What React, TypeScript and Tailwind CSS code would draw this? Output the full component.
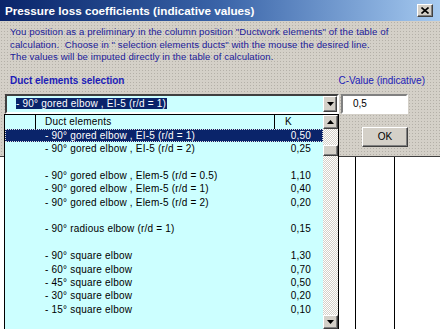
import React from 'react'

const rows: { text: string; k: string }[] = [
  { text: '- 90° gored elbow , EI-5 (r/d = 1)', k: '0,50' },
  { text: '- 90° gored elbow , EI-5 (r/d = 2)', k: '0,25' },
  { text: '', k: '' },
  { text: '- 90° gored elbow , Elem-5 (r/d = 0.5)', k: '1,10' },
  { text: '- 90° gored elbow , Elem-5 (r/d = 1)', k: '0,40' },
  { text: '- 90° gored elbow , Elem-5 (r/d = 2)', k: '0,20' },
  { text: '', k: '' },
  { text: '- 90° radious elbow (r/d = 1)', k: '0,15' },
  { text: '', k: '' },
  { text: '- 90° square elbow', k: '1,30' },
  { text: '- 60° square elbow', k: '0,70' },
  { text: '- 45° square elbow', k: '0,50' },
  { text: '- 30° square elbow', k: '0,20' },
  { text: '- 15° square elbow', k: '0,10' },
  { text: '', k: '' },
]

const raised =
  'bg-[#d4d0c8] border border-t-white border-l-white border-r-[#404040] border-b-[#404040] shadow-[inset_-1px_-1px_#808080]'

function Arrow({ up }: { up?: boolean }) {
  return (
    <svg width="7" height="4" viewBox="0 0 7 4">
      <path d={up ? 'M0 4 L3.5 0 L7 4 Z' : 'M0 0 L7 0 L3.5 4 Z'} fill="#000" />
    </svg>
  )
}

export default function App() {
  return (
    <div className="relative w-[440px] h-[329px] overflow-hidden bg-white font-['Liberation_Sans',Arial,sans-serif]">
      {/* dialog */}
      <div className="h-[157px] bg-[#d4d0c8] bg-[radial-gradient(#b4b0a8_0.6px,transparent_0.7px)] bg-[length:3px_3px] border-b border-[#404040]">
        <div className="h-[21px] flex items-center justify-between pl-[5px] pr-[7px] bg-gradient-to-r from-[#0a246a] via-[#3a64a8] to-[#a6caf0]">
          <span className="text-white font-bold text-[11.7px] leading-none">
            Pressure loss coefficients (indicative values)
          </span>
          <div className={`w-[16px] h-[13px] flex items-center justify-center ${raised}`}>
            <svg width="8" height="7" viewBox="0 0 8 7">
              <path d="M0.5 0.5 L7.5 6.5 M7.5 0.5 L0.5 6.5" stroke="#000" strokeWidth="1.6" />
            </svg>
          </div>
        </div>
        <div className="pt-[5px] pl-[10px] text-[#1a1a9a] text-[9.6px] leading-[12.5px] tracking-[0.1px]">
          <p>You position as a preliminary in the column position "Ductwork elements" of the table of</p>
          <p>calculation.&nbsp; Choose in " selection elements ducts" with the mouse the desired line.</p>
          <p>The values will be imputed directly in the table of calculation.</p>
        </div>
        <div className="mt-[11px] flex items-center justify-between pl-[10px] pr-[15px] text-[#1c1cb8] text-[10px] leading-[12px]">
          <span className="font-bold">Duct elements selection</span>
          <span>C-Value (indicative)</span>
        </div>
        <div className="mt-[7px] flex items-start pl-[5px]">
          <div className="w-[334px] h-[20px] flex bg-[#ccffff] border-2 border-t-[#404040] border-l-[#404040] border-r-white border-b-white">
            <div className="flex-1 flex items-center pl-[9px]">
              <span className="bg-[#0a246a] text-white text-[10px] tracking-[0.2px] leading-[11px] pr-[1px]">
                - 90° gored elbow , EI-5 (r/d = 1)
              </span>
            </div>
            <div className={`w-[14px] h-full flex items-center justify-center ${raised}`}>
              <Arrow />
            </div>
          </div>
          <div className="ml-[2px] w-[67px] flex flex-col items-end">
            <div className="w-full h-[20px] flex items-center pl-[10px] bg-white border-2 border-t-[#808080] border-l-[#808080] border-r-white border-b-white text-[10px] text-black">
              0,5
            </div>
            <div className={`mt-[13px] w-[46px] h-[20px] flex items-center justify-center text-[10px] text-black ${raised}`}>
              OK
            </div>
          </div>
        </div>
      </div>

      {/* worksheet behind */}
      <div className="flex h-[172px] bg-[radial-gradient(#f0c8d8_0.6px,transparent_0.7px)] bg-[length:4px_4px]">
        <div className="w-[355px]" />
        <div className="w-[39px] border-l border-black" />
        <div className="flex-1 border-l border-black" />
      </div>

      {/* open dropdown list */}
      <div className="absolute left-[4px] top-[114px] w-[335px] h-[216px] flex bg-[#ccffff] border border-black">
        <div className="flex-1 text-[10px] tracking-[0.2px] text-black">
          <div className="h-[14px] flex items-center leading-none">
            <div className="w-[31px] h-full border-r border-black" />
            <div className="w-[239px] h-full border-r border-black flex items-center pl-[9px]">Duct elements</div>
            <div className="pl-[10px]">K</div>
          </div>
          {rows.map((r, i) => (
            <div
              key={i}
              className={`h-[13.4px] flex items-center leading-none ${
                i === 0 ? 'bg-[#0a246a] text-white outline-1 outline-dotted outline-[#e0e0e0] -outline-offset-1' : ''
              }`}
            >
              <div className="w-[31px]" />
              <div className="w-[240px] pl-[9px] whitespace-nowrap">{r.text}</div>
              <div className="w-[47px] pr-[12px] text-right">{r.k}</div>
            </div>
          ))}
        </div>
        <div className="w-[15px] flex flex-col bg-[repeating-conic-gradient(#d4d0c8_0_25%,#ffffff_0_50%)] bg-[length:2px_2px]">
          <div className={`h-[14px] flex items-center justify-center ${raised}`}>
            <Arrow up />
          </div>
          <div className="flex-1">
            <div className={`mt-[16px] h-[11px] ${raised}`} />
          </div>
          <div className={`h-[14px] flex items-center justify-center ${raised}`}>
            <Arrow />
          </div>
        </div>
      </div>
    </div>
  )
}
